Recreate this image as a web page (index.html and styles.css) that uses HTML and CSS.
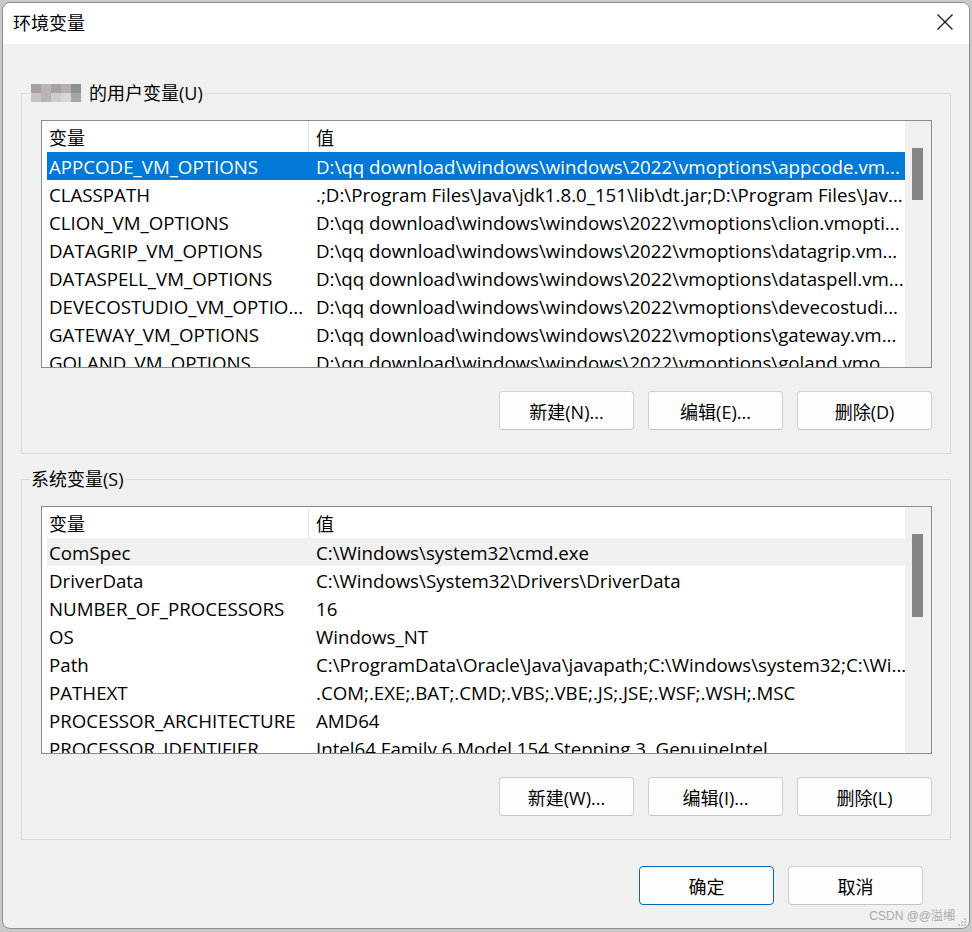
FILE: index.html
```html
<!DOCTYPE html>
<html lang="zh-CN">
<head>
    <meta charset="UTF-8">
    <title>环境变量</title>
    <link rel="stylesheet" href="styles.css">
</head>
<body>
    <div class="window">
        <div class="titlebar">
            <span class="title">环境变量</span>
            <span class="close">
                <svg width="16" height="16" viewBox="0 0 16 16"><path d="M0.5 0.5 L15.5 15.5 M15.5 0.5 L0.5 15.5" stroke="#1a1a1a" stroke-width="1.3" fill="none"/></svg>
            </span>
        </div>
        <div class="content">
            <fieldset class="group">
                <legend><span class="mosaic"><i style="background:#a9a1a1"></i><i style="background:#bcb4b3"></i><i style="background:#a4a2a8"></i><i style="background:#b6adac"></i><i style="background:#8c9294"></i><i style="background:#c9c3c0"></i><i style="background:#b9b5b2"></i><i style="background:#cacbce"></i><i style="background:#d3d7db"></i><i style="background:#a4a6a8"></i></span> 的用户变量(U)</legend>
                <div class="listview">
                    <div class="lv-main">
                        <div class="lv-head"><div class="c1">变量</div><div class="c2">值</div></div>
                        <div class="lv-row sel"><div class="c1">APPCODE_VM_OPTIONS</div><div class="c2">D:\qq download\windows\windows\2022\vmoptions\appcode.vm...</div></div>
                        <div class="lv-row"><div class="c1">CLASSPATH</div><div class="c2">.;D:\Program Files\Java\jdk1.8.0_151\lib\dt.jar;D:\Program Files\Jav...</div></div>
                        <div class="lv-row"><div class="c1">CLION_VM_OPTIONS</div><div class="c2">D:\qq download\windows\windows\2022\vmoptions\clion.vmopti...</div></div>
                        <div class="lv-row"><div class="c1">DATAGRIP_VM_OPTIONS</div><div class="c2">D:\qq download\windows\windows\2022\vmoptions\datagrip.vm...</div></div>
                        <div class="lv-row"><div class="c1">DATASPELL_VM_OPTIONS</div><div class="c2">D:\qq download\windows\windows\2022\vmoptions\dataspell.vm...</div></div>
                        <div class="lv-row"><div class="c1">DEVECOSTUDIO_VM_OPTIO...</div><div class="c2">D:\qq download\windows\windows\2022\vmoptions\devecostudi...</div></div>
                        <div class="lv-row"><div class="c1">GATEWAY_VM_OPTIONS</div><div class="c2">D:\qq download\windows\windows\2022\vmoptions\gateway.vm...</div></div>
                        <div class="lv-row"><div class="c1">GOLAND_VM_OPTIONS</div><div class="c2">D:\qq download\windows\windows\2022\vmoptions\goland.vmo...</div></div>
                    </div>
                    <div class="lv-scroll"><div class="thumb" style="height:52px"></div></div>
                </div>
                <div class="btns">
                    <button>新建(N)...</button>
                    <button>编辑(E)...</button>
                    <button>删除(D)</button>
                </div>
            </fieldset>

            <fieldset class="group sys">
                <legend>系统变量(S)</legend>
                <div class="listview">
                    <div class="lv-main">
                        <div class="lv-head"><div class="c1">变量</div><div class="c2">值</div></div>
                        <div class="lv-row hover"><div class="c1">ComSpec</div><div class="c2">C:\Windows\system32\cmd.exe</div></div>
                        <div class="lv-row"><div class="c1">DriverData</div><div class="c2">C:\Windows\System32\Drivers\DriverData</div></div>
                        <div class="lv-row"><div class="c1">NUMBER_OF_PROCESSORS</div><div class="c2">16</div></div>
                        <div class="lv-row"><div class="c1">OS</div><div class="c2">Windows_NT</div></div>
                        <div class="lv-row"><div class="c1">Path</div><div class="c2">C:\ProgramData\Oracle\Java\javapath;C:\Windows\system32;C:\Wi...</div></div>
                        <div class="lv-row"><div class="c1">PATHEXT</div><div class="c2">.COM;.EXE;.BAT;.CMD;.VBS;.VBE;.JS;.JSE;.WSF;.WSH;.MSC</div></div>
                        <div class="lv-row"><div class="c1">PROCESSOR_ARCHITECTURE</div><div class="c2">AMD64</div></div>
                        <div class="lv-row"><div class="c1">PROCESSOR_IDENTIFIER</div><div class="c2">Intel64 Family 6 Model 154 Stepping 3, GenuineIntel</div></div>
                    </div>
                    <div class="lv-scroll"><div class="thumb" style="height:83px"></div></div>
                </div>
                <div class="btns">
                    <button>新建(W)...</button>
                    <button>编辑(I)...</button>
                    <button>删除(L)</button>
                </div>
            </fieldset>

            <div class="dialog-btns">
                <button class="primary">确定</button>
                <button>取消</button>
            </div>
        </div>
        <div class="watermark">CSDN @@溢缃</div>
        <svg class="grip" width="10" height="10" viewBox="0 0 10 10">
            <rect x="7" y="1" width="2" height="2" fill="#c8c8c8"/>
            <rect x="4" y="4" width="2" height="2" fill="#c8c8c8"/>
            <rect x="7" y="4" width="2" height="2" fill="#c8c8c8"/>
            <rect x="1" y="7" width="2" height="2" fill="#c8c8c8"/>
            <rect x="4" y="7" width="2" height="2" fill="#c8c8c8"/>
            <rect x="7" y="7" width="2" height="2" fill="#c8c8c8"/>
        </svg>
    </div>
</body>
</html>
```

FILE: styles.css
```css
body { margin: 0; background: #c9c9c9; font-family: "Open Sans", "Noto Sans CJK SC", sans-serif; font-size: 18px; color: #000; }
.window { position: relative; margin: 2px 0 0 2px; width: 966px; height: 925px; border: 1px solid #8e8e8e; border-radius: 8px; background: #f0f0f0; overflow: hidden; }
.titlebar { height: 37px; padding-bottom: 4px; background: #fff; display: flex; align-items: center; justify-content: space-between; }
.title { margin-left: 10px; font-family: "Noto Sans CJK SC", sans-serif; line-height: 24px; }
.close { width: 16px; height: 16px; margin-right: 16px; display: flex; }

.content { padding: 37px 18px 0 18px; }
.group { margin: 0; padding: 15px 18px 23px 19px; border: 1px solid #dcdcdc; min-width: 0; }
.group.sys { margin-top: 13px; }
.group legend { margin-left: -11px; padding: 0 1px; line-height: 24px; height: 24px; display: flex; align-items: center; }
.mosaic { display: grid; grid-template-columns: repeat(5, 10px); grid-template-rows: 9px 9px; margin-right: 8px; }
.mosaic i { display: block; }

.listview { display: flex; height: 246px; border: 1px solid #868a91; background: #fff; }
.lv-main { flex: 1; min-width: 0; overflow: hidden; }
.lv-head { display: flex; height: 31px; align-items: stretch; }
.lv-head .c1 { width: 259px; padding-left: 7px; border-right: 1px solid #e5e5e5; display: flex; align-items: center; }
.lv-head .c2 { padding-left: 7px; display: flex; align-items: center; }
.lv-row { display: flex; height: 28px; margin-left: 5px; align-items: center; white-space: nowrap; font-size: 18.7px; }
.lv-row .c1 { width: 267px; padding-left: 2px; overflow: hidden; }
.lv-row .c2 { flex: 1; min-width: 0; overflow: hidden; }
.lv-row.sel { background: #0078d7; color: #fff; }
.lv-row.hover { background: #f0f0f0; }
.lv-scroll { width: 26px; background: #f0f0f0; }
.thumb { width: 11px; margin: 27px 0 0 7px; background: #858585; }

.btns { display: flex; justify-content: flex-end; gap: 14px; margin-top: 23px; }
button { width: 135px; height: 39px; font: inherit; color: #000; background: #fdfdfd; border: 1px solid #d0d0d0; border-bottom-color: #c4c4c4; border-radius: 4px; padding: 0; }
button.primary { border: 1px solid #0067c0; }
.dialog-btns { display: flex; justify-content: flex-end; gap: 14px; margin: 26px 28px 0 0; }

.watermark { position: absolute; right: 14px; bottom: 5px; font-family: "Liberation Sans", "Noto Sans CJK SC", sans-serif; font-size: 12px; color: #a8a8a8; }
.grip { position: absolute; right: 2px; bottom: 1px; }
```
